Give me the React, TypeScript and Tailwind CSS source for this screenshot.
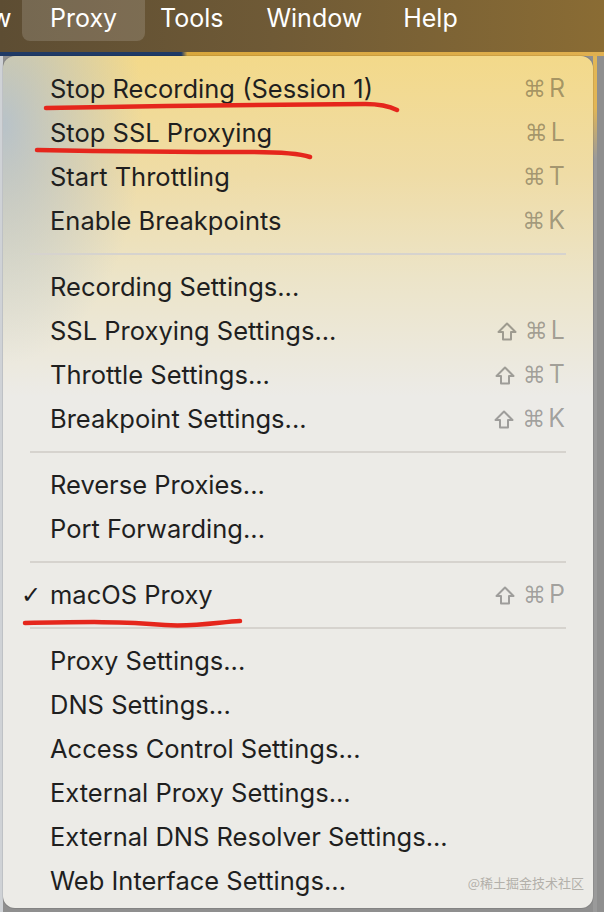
import React from 'react';

type Item = { label: string; keys?: string; shift?: boolean; checked?: boolean };

const groups: Item[][] = [
  [
    { label: 'Stop Recording (Session 1)', keys: 'R' },
    { label: 'Stop SSL Proxying', keys: 'L' },
    { label: 'Start Throttling', keys: 'T' },
    { label: 'Enable Breakpoints', keys: 'K' },
  ],
  [
    { label: 'Recording Settings...' },
    { label: 'SSL Proxying Settings...', keys: 'L', shift: true },
    { label: 'Throttle Settings...', keys: 'T', shift: true },
    { label: 'Breakpoint Settings...', keys: 'K', shift: true },
  ],
  [{ label: 'Reverse Proxies...' }, { label: 'Port Forwarding...' }],
  [{ label: 'macOS Proxy', keys: 'P', shift: true, checked: true }],
  [
    { label: 'Proxy Settings...' },
    { label: 'DNS Settings...' },
    { label: 'Access Control Settings...' },
    { label: 'External Proxy Settings...' },
    { label: 'External DNS Resolver Settings...' },
    { label: 'Web Interface Settings...' },
  ],
];

// mac shift key glyph (outlined arrow)
const ShiftGlyph = () => (
  <svg width="20" height="19" viewBox="0 0 20 19" className="mr-[8px]">
    <path
      d="M10 1.5 L18.5 10 H14 V17.5 H6 V10 H1.5 Z"
      fill="none"
      stroke="currentColor"
      strokeWidth="2"
      strokeLinejoin="round"
    />
  </svg>
);

const MenuRow: React.FC<{ item: Item }> = ({ item }) => (
  <div className="relative h-[44px] flex items-center pl-[47px] pr-[28px]">
    {item.checked && (
      <span className="absolute left-[18px] text-[24px] font-bold text-[#1d1d1d] font-['DejaVu_Sans']">✓</span>
    )}
    <span className="flex-1 text-[25.5px] text-[#1f1f1f]">{item.label}</span>
    {item.keys && (
      <span className="flex items-center text-[25px] text-black/[0.33]">
        {item.shift && <ShiftGlyph />}
        <span className="font-['DejaVu_Sans'] text-[23px] mr-[3px]">⌘</span>
        <span>{item.keys}</span>
      </span>
    )}
  </div>
);

const Separator = () => (
  <div className="h-[22px] flex items-center px-[27px]">
    <div className="h-[2px] w-full bg-[#d6d3ce]" />
  </div>
);

export default function App() {
  return (
    <div className="relative w-[604px] h-[912px] overflow-hidden bg-[#8f8f8f] font-['Inter','Liberation_Sans',sans-serif]">
      {/* macOS menu bar */}
      <div className="h-[52px] flex items-start bg-[linear-gradient(90deg,#5d4d33_0%,#6f5a36_45%,#8a6c34_100%)] text-white text-[25px]">
        <span className="h-[36px] leading-[36px] w-[22px] -ml-[9px]">w</span>
        <div className="ml-[9px] h-[41px] w-[123px] rounded-b-[8px] bg-white/15 pl-[28px] leading-[36px]">Proxy</div>
        <span className="ml-[15px] h-[36px] leading-[36px]">Tools</span>
        <span className="ml-[43px] h-[36px] leading-[36px]">Window</span>
        <span className="ml-[41px] h-[36px] leading-[36px]">Help</span>
      </div>
      <div className="h-[4px] bg-[linear-gradient(90deg,#1f3a66_0%,#1f3a66_30%,#d8a63c_31%,#e0b050_100%)]" />

      <div className="flex">
        <div className="w-[3px] h-[856px] bg-[#cfd2d6]" />
        <div className="w-[590px] h-[852px] rounded-[12px] overflow-hidden relative bg-[#ecebe7] bg-[image:radial-gradient(140px_240px_at_0%_8%,rgba(165,186,216,0.75),rgba(165,186,216,0)),linear-gradient(180deg,#f3d98a_0%,#efdca6_14%,#ece4c8_26%,#ecebe7_40%)] pt-[11px] pb-[5px] shadow-[0_0_0_1px_rgba(0,0,0,0.08)]">
          {groups.map((g, gi) => (
            <div key={gi}>
              {gi > 0 && <Separator />}
              {g.map((it) => (
                <MenuRow key={it.label} item={it} />
              ))}
            </div>
          ))}
          <span className="absolute right-[9px] bottom-[16px] text-[13px] text-[#b3b0aa] font-['Noto_Sans_CJK_SC',sans-serif]">
            @稀土掘金技术社区
          </span>
        </div>
        <div className="w-[4px] h-[856px] bg-[linear-gradient(180deg,#e2b655_0%,#e2b655_6%,#9a9a9a_12%,#9a9a9a_100%)]" />
        <div className="w-[7px] h-[856px] bg-[#8f8f8f]" />
      </div>

      {/* red hand-drawn underlines */}
      <svg className="absolute inset-0 pointer-events-none" width="604" height="912" viewBox="0 0 604 912">
        <g fill="none" stroke="#e5261c" strokeWidth="4.5" strokeLinecap="round">
          <path d="M46 108 C150 106 300 104 365 104 Q385 104 397 110" />
          <path d="M37 150 Q150 152 250 152 Q295 152 310 157" />
          <path d="M25 623 C80 622 120 621 165 625 C195 627 220 622 240 621" />
        </g>
      </svg>
    </div>
  );
}
